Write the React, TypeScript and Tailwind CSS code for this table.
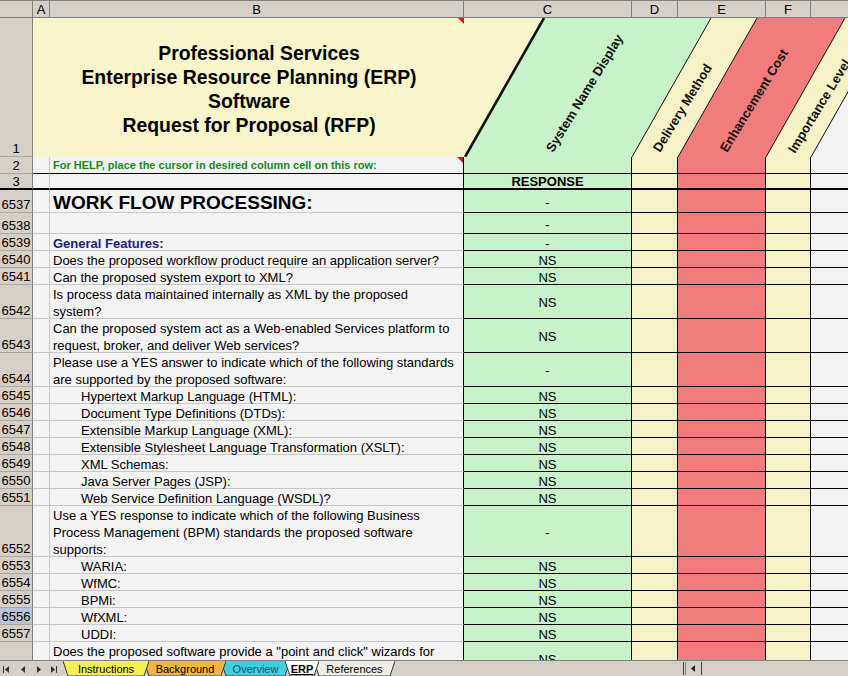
import React from 'react';

type Row = {
  n: string;
  h: number;
  lines: string[];
  c: string;
  indent?: boolean;
  kind?: 'big' | 'sub';
  sel?: boolean;
};

const H: Record<number, string> = {
  17: 'h-[17px]',
  21: 'h-[21px]',
  23: 'h-[23px]',
  34: 'h-[34px]',
  51: 'h-[51px]',
};

const rows: Row[] = [
  { n: '6537', h: 23, lines: ['WORK FLOW PROCESSING:'], c: '-', kind: 'big' },
  { n: '6538', h: 21, lines: [], c: '-' },
  { n: '6539', h: 17, lines: ['General Features:'], c: '-', kind: 'sub' },
  { n: '6540', h: 17, lines: ['Does the proposed workflow product require an application server?'], c: 'NS' },
  { n: '6541', h: 17, lines: ['Can the proposed system export to XML?'], c: 'NS' },
  { n: '6542', h: 34, lines: ['Is process data maintained internally as XML by the proposed', 'system?'], c: 'NS' },
  { n: '6543', h: 34, lines: ['Can the proposed system act as a Web-enabled Services platform to', 'request, broker, and deliver Web services?'], c: 'NS' },
  { n: '6544', h: 34, lines: ['Please use a YES answer to indicate which of the following standards', 'are supported by the proposed software:'], c: '-' },
  { n: '6545', h: 17, lines: ['Hypertext Markup Language (HTML):'], c: 'NS', indent: true },
  { n: '6546', h: 17, lines: ['Document Type Definitions (DTDs):'], c: 'NS', indent: true },
  { n: '6547', h: 17, lines: ['Extensible Markup Language (XML):'], c: 'NS', indent: true },
  { n: '6548', h: 17, lines: ['Extensible Stylesheet Language Transformation (XSLT):'], c: 'NS', indent: true },
  { n: '6549', h: 17, lines: ['XML Schemas:'], c: 'NS', indent: true },
  { n: '6550', h: 17, lines: ['Java Server Pages (JSP):'], c: 'NS', indent: true },
  { n: '6551', h: 17, lines: ['Web Service Definition Language (WSDL)?'], c: 'NS', indent: true },
  { n: '6552', h: 51, lines: ['Use a YES response to indicate which of the following Business', 'Process Management (BPM) standards the proposed software', 'supports:'], c: '-' },
  { n: '6553', h: 17, lines: ['WARIA:'], c: 'NS', indent: true },
  { n: '6554', h: 17, lines: ['WfMC:'], c: 'NS', indent: true },
  { n: '6555', h: 17, lines: ['BPMi:'], c: 'NS', indent: true },
  { n: '6556', h: 17, lines: ['WfXML:'], c: 'NS', indent: true, sel: true },
  { n: '6557', h: 17, lines: ['UDDI:'], c: 'NS', indent: true },
  { n: '6558', h: 34, lines: ['Does the proposed software provide a "point and click" wizards for', 'process design?'], c: 'NS' },
];

function DataRow({ r }: { r: Row }) {
  return (
    <div className={`flex ${H[r.h]}`}>
      <div
        className={`w-[33px] shrink-0 flex items-end justify-center border-r border-r-[#808080] border-b border-b-[#aaa69e] text-[13px] leading-[14px] ${
          r.sel ? 'bg-[#b8c4de]' : 'bg-[#d4d0c8]'
        }`}
      >
        {r.n}
      </div>
      <div className="w-[17px] shrink-0 bg-[#f3f3f3] border-r border-b border-[#c8c8c8]" />
      <div className="w-[414px] shrink-0 bg-[#f3f3f3] border-r border-r-black border-b border-b-[#c8c8c8] flex flex-col justify-end px-[3px] whitespace-nowrap">
        <div className="-mb-[2px]">
          {r.lines.map((l, i) => (
            <div
              key={i}
              className={
                r.kind === 'big'
                  ? 'text-[19px] font-bold leading-[22px]'
                  : r.kind === 'sub'
                  ? 'text-[13px] font-bold leading-[17px] text-[#1d2280]'
                  : `text-[13px] leading-[17px] ${r.indent ? 'pl-[28px]' : ''}`
              }
            >
              {l}
            </div>
          ))}
        </div>
      </div>
      <div className="w-[168px] shrink-0 bg-[#c8f2c8] border-r border-b border-black flex items-center justify-center pt-[2px] text-[13px] leading-[15px]">
        {r.c}
      </div>
      <div className="w-[46px] shrink-0 bg-[#f5f2c6] border-r border-b border-black" />
      <div className="w-[88px] shrink-0 bg-[#f27c7c] border-r border-b border-black" />
      <div className="w-[45px] shrink-0 bg-[#f5f2c6] border-r border-b border-black" />
      <div className="w-[37px] shrink-0 bg-[#f3f3f3] border-b border-black" />
    </div>
  );
}

function HeaderBand() {
  return (
    <div className="relative w-[815px] h-[139px] border-b border-black">
      <svg className="absolute inset-0" width="815" height="139" viewBox="0 0 815 139">
        <rect width="815" height="139" fill="#f3f3f3" />
        <polygon points="0,0 511,0 432,139 0,139" fill="#f7f5c9" />
        <polygon points="511,0 678,0 599,139 432,139" fill="#c8f2c8" />
        <polygon points="678,0 724,0 645,139 599,139" fill="#f5f2c6" />
        <polygon points="724,0 812,0 733,139 645,139" fill="#f27c7c" />
        <polygon points="812,0 857,0 778,139 733,139" fill="#f5f2c6" />
        <line x1="432" y1="139" x2="511" y2="0" stroke="#111" strokeWidth="2.6" />
        <line x1="599" y1="139" x2="678" y2="0" stroke="#111" strokeWidth="1" />
        <line x1="645" y1="139" x2="724" y2="0" stroke="#111" strokeWidth="1" />
        <line x1="733" y1="139" x2="812" y2="0" stroke="#111" strokeWidth="1" />
        <line x1="778" y1="139" x2="857" y2="0" stroke="#111" strokeWidth="1" />
        <polygon points="425,0 431,0 431,6" fill="#c82020" />
        <g fontFamily="'Liberation Sans', Arial, sans-serif" fontSize="13" fontWeight="bold" fill="#111">
          <text x="520" y="135" transform="rotate(-58.5 520 135)">System Name Display</text>
          <text x="627" y="135" transform="rotate(-58.5 627 135)">Delivery Method</text>
          <text x="694" y="135" transform="rotate(-58.5 694 135)">Enhancement Cost</text>
          <text x="762" y="136" transform="rotate(-58.5 762 136)">Importance Level</text>
        </g>
      </svg>
      <div className="relative flex h-full items-center pt-[4px]">
        <div className="ml-[17px] w-[398px] text-center text-[19.4px] font-bold leading-[24px]">
          <div className="pl-[20px]">Professional Services</div>
          <div>Enterprise Resource Planning (ERP)</div>
          <div>Software</div>
          <div>Request for Proposal (RFP)</div>
        </div>
      </div>
    </div>
  );
}

function Tab({
  label,
  w,
  fill,
  className,
  textClass,
}: {
  label: string;
  w: number;
  fill: string;
  className: string;
  textClass: string;
}) {
  return (
    <div className={`relative h-[15px] shrink-0 flex items-center justify-center ${className}`}>
      <svg className="absolute inset-0" width={w} height="15" viewBox={`0 0 ${w} 15`}>
        <polygon points={`0,0 ${w},0 ${w - 5},15 5,15`} fill={fill} />
        <polyline points={`0,0 5,15 ${w - 5},15 ${w},0`} fill="none" stroke="#3a3a3a" strokeWidth="1" />
      </svg>
      <span className={`relative text-[11px] leading-[14px] pt-[1px] ${textClass}`}>{label}</span>
    </div>
  );
}

export default function App() {
  return (
    <div className="w-[848px] h-[676px] overflow-hidden bg-[#d4d0c8] font-['Liberation_Sans',Arial,sans-serif] text-black">
      <div className="h-[660px] overflow-hidden">
        {/* column letters */}
        <div className="flex h-[18px] border-t border-[#808080] bg-[#d4d0c8] text-[13px] leading-[17px]">
          <div className="w-[33px] shrink-0 border-r border-b border-[#808080]" />
          <div className="w-[17px] shrink-0 border-r border-b border-[#808080] text-center">A</div>
          <div className="w-[414px] shrink-0 border-r border-b border-[#808080] text-center">B</div>
          <div className="w-[168px] shrink-0 border-r border-b border-[#808080] text-center">C</div>
          <div className="w-[46px] shrink-0 border-r border-b border-[#808080] text-center">D</div>
          <div className="w-[88px] shrink-0 border-r border-b border-[#808080] text-center">E</div>
          <div className="w-[45px] shrink-0 border-r border-b border-[#808080] text-center">F</div>
          <div className="w-[37px] shrink-0 border-b border-[#808080]" />
        </div>

        {/* row 1 */}
        <div className="flex h-[139px]">
          <div className="w-[33px] shrink-0 flex items-end justify-center border-r border-r-[#808080] border-b border-b-[#aaa69e] bg-[#d4d0c8] text-[13px] leading-[14px]">
            1
          </div>
          <HeaderBand />
        </div>

        {/* row 2 */}
        <div className="flex h-[17px]">
          <div className="w-[33px] shrink-0 flex items-end justify-center border-r border-r-[#808080] border-b border-b-[#aaa69e] bg-[#d4d0c8] text-[13px] leading-[14px]">
            2
          </div>
          <div className="w-[17px] shrink-0 bg-[#f3f3f3] border-r border-r-[#c8c8c8] border-b border-b-black" />
          <div className="relative w-[414px] shrink-0 bg-[#f3f3f3] border-r border-r-black border-b border-b-black flex items-end px-[3px] whitespace-nowrap">
            <span className="text-[11px] font-bold leading-[15px] text-[#178a17]">
              For HELP, place the cursor in desired column cell on this row:
            </span>
            <span className="absolute right-0 top-0 h-0 w-0 border-l-[6px] border-l-transparent border-t-[6px] border-t-[#c82020]" />
          </div>
          <div className="w-[168px] shrink-0 bg-[#c8f2c8] border-r border-b border-black" />
          <div className="w-[46px] shrink-0 bg-[#f5f2c6] border-r border-b border-black" />
          <div className="w-[88px] shrink-0 bg-[#f27c7c] border-r border-b border-black" />
          <div className="w-[45px] shrink-0 bg-[#f5f2c6] border-r border-b border-black" />
          <div className="w-[37px] shrink-0 bg-[#f3f3f3] border-b border-black" />
        </div>

        {/* row 3 */}
        <div className="flex h-[16px]">
          <div className="w-[33px] shrink-0 flex items-end justify-center border-r border-r-[#808080] border-b-2 border-b-black bg-[#d4d0c8] text-[13px] leading-[13px]">
            3
          </div>
          <div className="w-[17px] shrink-0 bg-[#f3f3f3] border-r border-r-[#c8c8c8] border-b-2 border-b-black" />
          <div className="w-[414px] shrink-0 bg-[#f3f3f3] border-r border-r-black border-b-2 border-b-black" />
          <div className="w-[168px] shrink-0 bg-[#c8f2c8] border-r border-b-2 border-black flex items-center justify-center pt-[1px] text-[13px] font-bold leading-[14px]">
            RESPONSE
          </div>
          <div className="w-[46px] shrink-0 bg-[#f5f2c6] border-r border-b-2 border-black" />
          <div className="w-[88px] shrink-0 bg-[#f27c7c] border-r border-b-2 border-black" />
          <div className="w-[45px] shrink-0 bg-[#f5f2c6] border-r border-b-2 border-black" />
          <div className="w-[37px] shrink-0 bg-[#f3f3f3] border-b-2 border-black" />
        </div>

        {rows.map((r) => (
          <DataRow key={r.n} r={r} />
        ))}
      </div>

      {/* sheet tabs */}
      <div className="flex h-[16px] border-t border-[#808080] bg-[#d4d0c8]">
        <svg width="63" height="15" viewBox="0 0 63 15" className="shrink-0">
          <g fill="#333">
            <rect x="3" y="5" width="1" height="7" />
            <polygon points="9,5 9,12 5,8.5" />
            <polygon points="25,5 25,12 21,8.5" />
            <polygon points="37,5 37,12 41,8.5" />
            <polygon points="51,5 51,12 55,8.5" />
            <rect x="56" y="5" width="1" height="7" />
          </g>
        </svg>
        <Tab label="Instructions" w={86} fill="#f8f050" className="w-[86px] z-50" textClass="" />
        <Tab label="Background" w={82} fill="#f0b642" className="w-[82px] -ml-[5px] z-40" textClass="" />
        <Tab label="Overview" w={69} fill="#3fd0e0" className="w-[69px] -ml-[5px] z-30" textClass="text-[#2d4f6e]" />
        <Tab label="ERP" w={34} fill="#ffffff" className="w-[34px] -ml-[5px] z-[60]" textClass="font-bold underline" />
        <Tab label="References" w={81} fill="#efeee6" className="w-[81px] -ml-[5px] z-20" textClass="" />
        <div className="w-[286px] shrink-0" />
        <svg width="22" height="15" viewBox="0 0 22 15" className="shrink-0">
          <rect x="2" y="1" width="1" height="13" fill="#404040" />
          <rect x="4" y="1" width="1" height="13" fill="#808080" />
          <polygon points="14,4 14,11 10,7.5" fill="#222" />
          <rect x="20" y="1" width="1" height="13" fill="#404040" />
        </svg>
      </div>
    </div>
  );
}
